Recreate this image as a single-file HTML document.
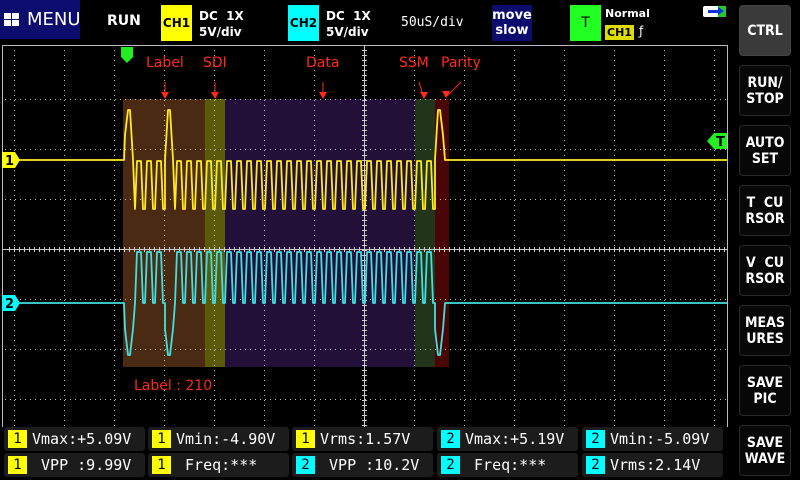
<!DOCTYPE html>
<html><head><meta charset="utf-8"><style>
*{margin:0;padding:0;box-sizing:border-box}
body{width:800px;height:480px;background:#000;overflow:hidden;position:relative;font-family:"DejaVu Sans","Liberation Sans",sans-serif;color:#fff}
.a{position:absolute}
.btn{position:absolute;left:739px;width:52px;height:51px;border:1px solid #2a2a2a;border-radius:4px;background:#070707;font-weight:bold;font-size:14px;line-height:16px;text-align:center;display:flex;align-items:center;justify-content:center;font-family:"DejaVu Sans Condensed","DejaVu Sans",sans-serif}
.m{position:absolute;width:141px;height:24px;background:#1c1c1c;border-radius:3px;font-size:15px;line-height:24px;font-family:"DejaVu Sans Mono","Liberation Mono",monospace}
.m b{position:absolute;left:4px;top:3px;width:19px;height:18px;font-size:14px;line-height:18px;text-align:center;color:#000;font-weight:normal}
.m span{position:absolute;left:28px;top:0}
.lb{color:#ff2a1a;font-size:14px;position:absolute;font-family:"DejaVu Sans",sans-serif}
</style></head><body>
<div class="a" style="left:0;top:0;width:80px;height:39px;background:#0c0c6e"></div>
<div class="a" style="left:4px;top:13px;width:7px;height:6px;background:#fff"></div>
<div class="a" style="left:12px;top:13px;width:7px;height:6px;background:#fff"></div>
<div class="a" style="left:4px;top:20px;width:7px;height:6px;background:#fff"></div>
<div class="a" style="left:12px;top:20px;width:7px;height:6px;background:#fff"></div>
<div class="a" style="left:27px;top:9px;font-size:18px">MENU</div>
<div class="a" style="left:107px;top:13px;font-size:14px;font-weight:bold">RUN</div>
<div class="a" style="left:161px;top:5px;width:31px;height:36px;background:#ffff00;color:#000;font-size:12px;font-weight:bold;line-height:36px;text-align:center">CH1</div>
<div class="a" style="left:199px;top:8px;font-size:12px;font-weight:bold;line-height:16px">DC&nbsp;&nbsp;1X<br>5V/div</div>
<div class="a" style="left:288px;top:5px;width:31px;height:36px;background:#00ffff;color:#000;font-size:12px;font-weight:bold;line-height:36px;text-align:center">CH2</div>
<div class="a" style="left:326px;top:8px;font-size:12px;font-weight:bold;line-height:16px">DC&nbsp;&nbsp;1X<br>5V/div</div>
<div class="a" style="left:401px;top:15px;font-size:13px;font-family:'DejaVu Sans Mono',monospace">50uS/div</div>
<div class="a" style="left:492px;top:5px;width:40px;height:36px;background:#0c0c6e;font-size:13px;font-weight:bold;line-height:15px;text-align:center;padding-top:3px">move<br>slow</div>
<div class="a" style="left:570px;top:5px;width:31px;height:36px;background:#22ff22;color:#000;font-size:14px;line-height:36px;text-align:center">T</div>
<div class="a" style="left:605px;top:7px;font-size:11px;font-weight:bold">Normal</div>
<div class="a" style="left:605px;top:25px;width:29px;height:15px;background:#dddd00;color:#000;font-size:11px;font-weight:bold;text-align:center;line-height:15px">CH1</div>
<div class="a" style="left:639px;top:24px;font-size:12px">ƒ</div>
<div class="a" style="left:703px;top:6px;width:23px;height:11px;background:#fff;border-radius:2px"></div>
<div class="a" style="left:718px;top:6px;width:8px;height:11px;background:#22cc22"></div>
<div class="a" style="left:708px;top:10px;width:12px;height:3px;background:#1030e0"></div>
<div class="a" style="left:718px;top:7px;border-left:6px solid #1030e0;border-top:4.5px solid transparent;border-bottom:4.5px solid transparent"></div>

<svg class="a" style="left:0;top:0" width="800" height="480" id="g"></svg>

<div class="lb" style="left:146px;top:55px">Label</div>
<div class="lb" style="left:203px;top:55px">SDI</div>
<div class="lb" style="left:306px;top:55px">Data</div>
<div class="lb" style="left:399px;top:55px">SSM</div>
<div class="lb" style="left:441px;top:55px">Parity</div>
<div class="lb" style="left:134px;top:378px">Label : 210</div>

<div class="btn" style="top:5px;background:#3a3a3a;border-color:#444">CTRL</div>
<div class="btn" style="top:65px">RUN/<br>STOP</div>
<div class="btn" style="top:125px">AUTO<br>SET</div>
<div class="btn" style="top:185px">T&nbsp;&nbsp;CU<br>RSOR</div>
<div class="btn" style="top:245px">V&nbsp;&nbsp;CU<br>RSOR</div>
<div class="btn" style="top:305px">MEAS<br>URES</div>
<div class="btn" style="top:365px">SAVE<br>PIC</div>
<div class="btn" style="top:425px">SAVE<br>WAVE</div>

<div class="m" style="left:4px;top:427px"><b style="background:#ff0">1</b><span>Vmax:+5.09V</span></div>
<div class="m" style="left:148px;top:427px"><b style="background:#ff0">1</b><span>Vmin:-4.90V</span></div>
<div class="m" style="left:292px;top:427px"><b style="background:#ff0">1</b><span>Vrms:1.57V</span></div>
<div class="m" style="left:437px;top:427px"><b style="background:#0ff">2</b><span>Vmax:+5.19V</span></div>
<div class="m" style="left:582px;top:427px"><b style="background:#0ff">2</b><span>Vmin:-5.09V</span></div>
<div class="m" style="left:4px;top:453px"><b style="background:#ff0">1</b><span>&nbsp;VPP :9.99V</span></div>
<div class="m" style="left:148px;top:453px"><b style="background:#ff0">1</b><span>&nbsp;Freq:***</span></div>
<div class="m" style="left:292px;top:453px"><b style="background:#0ff">2</b><span>&nbsp;VPP :10.2V</span></div>
<div class="m" style="left:437px;top:453px"><b style="background:#0ff">2</b><span>&nbsp;Freq:***</span></div>
<div class="m" style="left:582px;top:453px"><b style="background:#0ff">2</b><span>Vrms:2.14V</span></div>

<script>
var s='';
s+='<rect x="123" y="99" width="82" height="268" fill="#4a2a12"/>';
s+='<rect x="205" y="99" width="20" height="268" fill="#5a5a0a"/>';
s+='<rect x="225" y="99" width="190" height="268" fill="#221038"/>';
s+='<rect x="415" y="99" width="20" height="268" fill="#22351a"/>';
s+='<rect x="435" y="99" width="14" height="268" fill="#4a0606"/>';
s+='<path d="M2.5 45.5H727.5V427M2.5 45.5V427" stroke="#bbb" fill="none"/>';
var d='';
for(var x=14;x<=714;x+=50){if(x==364)continue;for(var y=50;y<=425;y+=5)d+='M'+x+' '+y+'h1v1h-1z';}
for(var y=99;y<=399;y+=50){if(y==249)continue;for(var x=5;x<=725;x+=5)d+='M'+x+' '+y+'h1v1h-1z';}
s+='<path d="'+d+'" fill="#bbb"/>';
s+='<path d="M364.5 45V427M2 249.5H727" stroke="#ccc"/>';
var t='';for(var x=9;x<727;x+=5)t+='M'+x+'.5 247V252';for(var y=50;y<427;y+=5)t+='M362 '+y+'.5H367';
s+='<path d="'+t+'" stroke="#ccc"/>';
var tall={0:1,4:1,31:1};
function wave(base,low,hi,th,col){
 var p='M3 '+base+' L124 '+base;
 for(var k=0;k<32;k++){var c=129+10*k;var T=tall[k];var h=T?th:hi;
  var pre=(k==0)?base:low, post=(k==31)?base:low;
  if(T){p+=' L'+(c-4)+' '+((pre+h)/2+ (k==0?0:0))+' L'+(c-1)+' '+h+' L'+(c+1)+' '+h+' L'+(c+4)+' '+((post+h)/2)+' L'+(c+6)+' '+post;}
  else{p+=' L'+(c-4)+' '+pre+' L'+(c-2)+' '+h+' L'+(c+2)+' '+h+' L'+(c+4)+' '+post;}
  if(k<31)p+=' L'+(c+6)+' '+low;}
 p+=' L447 '+base+' L727 '+base;
 return '<path d="'+p+'" stroke="'+col+'" stroke-width="1.8" fill="none" stroke-linejoin="round"/>';}
s+=wave(160,209,161,110,'#ffea20');
s+=wave(303,303,252,355,'#40e0e0');
var ar=[[165,82,165,98],[215,82,215,98],[323,82,323,98],[419,82,424,98],[461,82,446,97]];
ar.forEach(function(a){s+='<line x1="'+a[0]+'" y1="'+a[1]+'" x2="'+a[2]+'" y2="'+a[3]+'" stroke="#ff2a1a"/>';
 s+='<polygon points="'+(a[2]-4)+','+(a[3]-6)+' '+(a[2]+4)+','+(a[3]-6)+' '+a[2]+','+(a[3]+1)+'" fill="#ff2a1a"/>';});
s+='<polygon points="2,152 15,152 20,160 15,168 2,168" fill="#ffff00"/><text x="5" y="165" font-size="13" font-weight="bold" fill="#000" font-family="DejaVu Sans">1</text>';
s+='<polygon points="2,295 15,295 20,303 15,311 2,311" fill="#00ffff"/><text x="5" y="308" font-size="13" font-weight="bold" fill="#000" font-family="DejaVu Sans">2</text>';
s+='<polygon points="727,133 714,133 707,141 714,149 727,149" fill="#22ee22"/><text x="716" y="146" font-size="13" font-weight="bold" fill="#000" font-family="DejaVu Sans">T</text>';
s+='<polygon points="121,47 133,47 133,57 127,63 121,57" fill="#22ee22"/>';
document.getElementById('g').innerHTML=s;
</script>
</body></html>
